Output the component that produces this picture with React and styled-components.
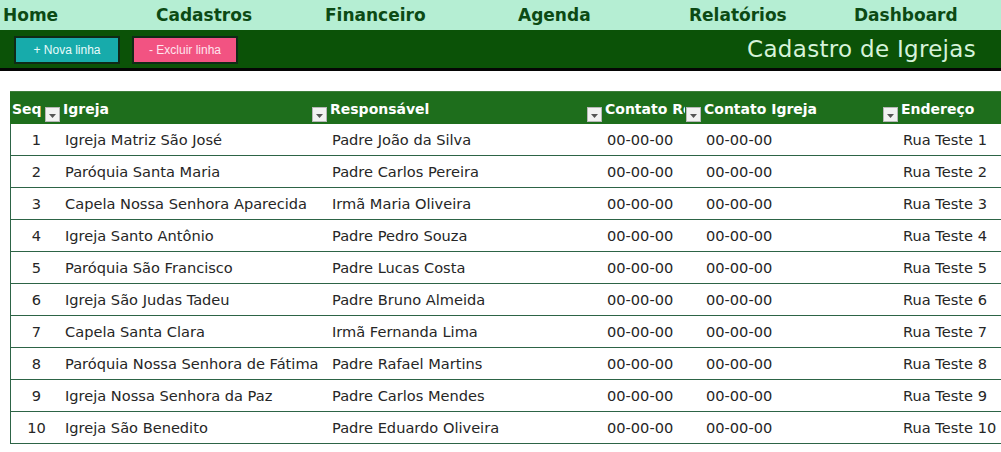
import React from 'react';
import styled, { createGlobalStyle } from 'styled-components';

const GlobalStyle = createGlobalStyle`
  html, body {
    margin: 0;
    padding: 0;
    background: #ffffff;
    overflow: hidden;
  }
  body {
    font-family: "DejaVu Sans", "Liberation Sans", sans-serif;
  }
`;

const NavBar = styled.nav`
  height: 30px;
  background: #b5eed3;
  display: flex;
  align-items: center;
  font-weight: bold;
  font-size: 17px;
  color: #0c4a14;
`;

const NavItem = styled.div`
  width: ${p => p.w}px;
  padding-left: ${p => p.pl || 0}px;
  box-sizing: border-box;
`;

const Toolbar = styled.div`
  height: 38px;
  background: #0b5207;
  border-bottom: 3px solid #050505;
  display: flex;
  align-items: center;
  padding: 0 25px 0 14px;
  gap: 12px;
`;

const ActionButton = styled.button`
  width: 106px;
  height: 28px;
  border: 2px solid #0f2a16;
  background: ${p => p.variant === 'danger' ? '#f25382' : '#17abab'};
  color: ${p => p.variant === 'danger' ? '#ffe4ee' : '#e9fbfb'};
  font-family: "Liberation Sans", sans-serif;
  font-size: 12px;
  padding: 0;
  margin-top: 2px;
`;

const Title = styled.h1`
  margin: 0 0 0 auto;
  font-weight: normal;
  font-size: 23px;
  color: #d6f3da;
  letter-spacing: 0.3px;
`;

const TableArea = styled.div`
  padding: 20px 0 0 10px;
  width: 1040px;
`;

const cols = '51px 267px 275px 99px 197px 140px';

const HeaderRow = styled.div`
  display: grid;
  grid-template-columns: ${cols};
  height: 33px;
  background: #1e6e1c;
  border-top: 1px solid #3d7d3a;
  box-sizing: border-box;
`;

const HeaderCell = styled.div`
  position: relative;
  color: #ffffff;
  font-weight: bold;
  font-size: 14px;
  padding: 9px 0 0 2px;
`;

const HeaderLabel = styled.div`
  max-width: ${p => p.clip ? 'calc(100% - 17px)' : '100%'};
  overflow: hidden;
  white-space: nowrap;
`;

const FilterBox = styled.span`
  position: absolute;
  right: 1px;
  bottom: 2px;
  width: 15px;
  height: 15px;
  background: #f2f2f2;
  border: 1px solid #b7b7b7;
  box-sizing: border-box;
  display: flex;
  align-items: flex-end;
  justify-content: center;
  padding-bottom: 3px;
`;

const Row = styled.div`
  display: grid;
  grid-template-columns: ${cols};
  height: 32px;
  border-left: 1px solid #2d6446;
  border-bottom: 1px solid #2d6446;
  box-sizing: border-box;
  align-items: center;
  font-size: 14.6px;
  color: #262626;
`;

const Cell = styled.div`
  white-space: nowrap;
  overflow: hidden;
  padding-left: ${p => p.pl ?? 2}px;
  text-align: ${p => p.center ? 'center' : 'left'};
`;

const Filter = () => (
  <FilterBox>
    <svg width="7" height="4" viewBox="0 0 7 4">
      <path d="M0 0 L7 0 L3.5 4 Z" fill="#555" />
    </svg>
  </FilterBox>
);

const rows = [
  ['Igreja Matriz São José', 'Padre João da Silva'],
  ['Paróquia Santa Maria', 'Padre Carlos Pereira'],
  ['Capela Nossa Senhora Aparecida', 'Irmã Maria Oliveira'],
  ['Igreja Santo Antônio', 'Padre Pedro Souza'],
  ['Paróquia São Francisco', 'Padre Lucas Costa'],
  ['Igreja São Judas Tadeu', 'Padre Bruno Almeida'],
  ['Capela Santa Clara', 'Irmã Fernanda Lima'],
  ['Paróquia Nossa Senhora de Fátima', 'Padre Rafael Martins'],
  ['Igreja Nossa Senhora da Paz', 'Padre Carlos Mendes'],
  ['Igreja São Benedito', 'Padre Eduardo Oliveira'],
];

const navItems = [
  ['Home', 156, 3],
  ['Cadastros', 169, 0],
  ['Financeiro', 193, 0],
  ['Agenda', 171, 0],
  ['Relatórios', 165, 0],
  ['Dashboard', 140, 0],
];

const headers = [
  ['Seq', false],
  ['Igreja', false],
  ['Responsável', false],
  ['Contato Responsável', true],
  ['Contato Igreja', false],
  ['Endereço', false],
];

export default function App() {
  return (
    <>
      <GlobalStyle />
      <NavBar>
        {navItems.map(([label, w, pl]) => (
          <NavItem key={label} w={w} pl={pl}>{label}</NavItem>
        ))}
      </NavBar>
      <Toolbar>
        <ActionButton>+ Nova linha</ActionButton>
        <ActionButton variant="danger">- Excluir linha</ActionButton>
        <Title>Cadastro de Igrejas</Title>
      </Toolbar>
      <TableArea>
        <HeaderRow>
          {headers.map(([h, clip]) => (
            <HeaderCell key={h}>
              <HeaderLabel clip={clip} title={h}>{h}</HeaderLabel>
              <Filter />
            </HeaderCell>
          ))}
        </HeaderRow>
        {rows.map(([igreja, resp], i) => (
          <Row key={i}>
            <Cell center pl={0}>{i + 1}</Cell>
            <Cell pl={3}>{igreja}</Cell>
            <Cell pl={3}>{resp}</Cell>
            <Cell pl={3}>00-00-00</Cell>
            <Cell pl={3}>00-00-00</Cell>
            <Cell pl={3}>Rua Teste {i + 1}</Cell>
          </Row>
        ))}
      </TableArea>
    </>
  );
}
